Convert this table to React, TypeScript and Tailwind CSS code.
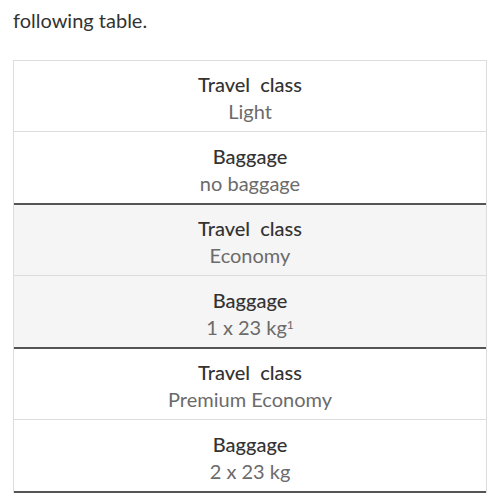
const rows = [
  { travel: 'Light', baggage: 'no baggage', sup: false, shaded: false },
  { travel: 'Economy', baggage: '1 x 23 kg', sup: true, shaded: true },
  { travel: 'Premium Economy', baggage: '2 x 23 kg', sup: false, shaded: false },
]

function Cell({ label, value, sup, last }: { label: string; value: string; sup?: boolean; last?: boolean }) {
  return (
    <div
      className={
        last
          ? 'h-[73px] border-b-2 border-[#555] pt-[11px] text-center leading-[27px]'
          : 'h-[71px] border-b border-[#ddd] pt-[10px] text-center leading-[27px]'
      }
    >
      <div className="font-medium text-[#333]">{label}</div>
      <div className="text-[#6b6b6b]">
        {value}
        {sup && <sup className="text-[12px]">1</sup>}
      </div>
    </div>
  )
}

export default function App() {
  return (
    <div className="min-h-[500px] bg-white px-[13px] pt-[6px] text-[20px] font-['Lato',sans-serif]">
      <p className="leading-[28px] text-[#333]">following table.</p>
      <div className="mt-[26px] border-x border-t border-[#ddd]">
        {rows.map((r) => (
          <div key={r.travel} className={r.shaded ? 'bg-[#f5f5f5]' : 'bg-white'}>
            <Cell label={'Travel\u00a0 class'} value={r.travel} />
            <Cell label="Baggage" value={r.baggage} sup={r.sup} last />
          </div>
        ))}
      </div>
    </div>
  )
}
